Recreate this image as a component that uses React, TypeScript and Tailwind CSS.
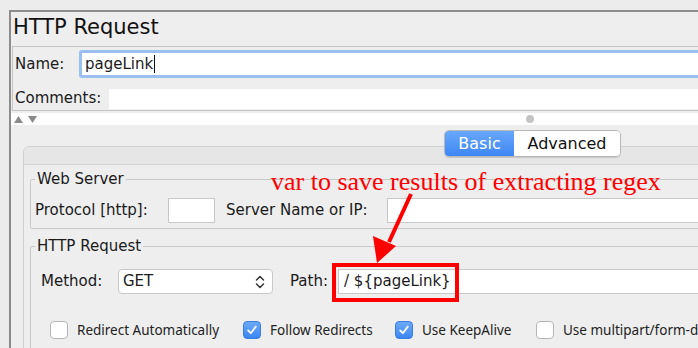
import React from 'react'

const ui = { fontFamily: '"DejaVu Sans", "Noto Sans", sans-serif' }

function Check({ on }: { on?: boolean }) {
  if (on) {
    return (
      <span className="w-[18px] h-[18px] rounded-[4px] bg-gradient-to-b from-[#6aa9f7] to-[#3a87f2] border border-[#3b7ddc] flex items-center justify-center shrink-0">
        <svg width="12" height="12" viewBox="0 0 12 12">
          <path d="M2.2 6.4 L4.8 9.2 L9.8 2.6" fill="none" stroke="#fff" strokeWidth="1.8" strokeLinecap="round" strokeLinejoin="round" />
        </svg>
      </span>
    )
  }
  return <span className="w-[18px] h-[18px] rounded-[4px] bg-white border border-[#b5b5b5] shrink-0" />
}

function Option({ on, label, w }: { on?: boolean, label: string, w: string }) {
  return (
    <div className={'flex items-center shrink-0 ' + w}>
      <Check on={on} />
      <span className="ml-[9px] whitespace-nowrap">{label}</span>
    </div>
  )
}

function GroupBox({ title, children, className }: { title: string, children: React.ReactNode, className?: string }) {
  return (
    <div className={'relative border border-[#c8c8c8] rounded-[2px] ' + (className || '')}>
      <span className="absolute -top-[11px] left-[4px] px-[2px] bg-[#eeeeee] text-[15px] leading-[20px] text-[#1a1a1a]">{title}</span>
      {children}
    </div>
  )
}

export default function App() {
  return (
    <div className="w-[698px] h-[348px] bg-[#ececec] overflow-hidden relative" style={ui}>
      <div className="pt-[10px] pl-[9px]">
        <div className="border-t-2 border-l-2 border-[#8c8c8c] bg-[#eeeeee] w-[1000px] h-[400px]">
          {/* title */}
          <div className="h-[34px] pl-[2px] pt-[1px] text-[21px] leading-[28px] text-[#111]">HTTP Request</div>

          {/* name / comments */}
          <div className="ml-[1px] border border-[#c4c4c4] h-[65px] text-[15px] text-[#1a1a1a]">
            <div className="flex items-center h-[34px] pl-[2px]">
              <span className="w-[64px] shrink-0">Name:</span>
              <div className="flex-1 h-[28px] bg-white border-[3px] border-[#9bbff0] rounded-[3px] flex items-center pl-[3px]">
                pageLink<span className="w-px h-[18px] bg-[#111] ml-px" />
              </div>
            </div>
            <div className="flex items-center h-[21px] mt-[7px] pl-[2px]">
              <span className="w-[94px] shrink-0">Comments:</span>
              <div className="flex-1 h-[20px] bg-white" />
            </div>
          </div>

          {/* splitter */}
          <div className="h-[12px] mt-[2px] bg-white flex items-center pl-[3px] gap-[5px] relative">
            <svg width="9" height="7" viewBox="0 0 9 7"><path d="M0 7 L4.5 0 L9 7 Z" fill="#8a8a8a" /></svg>
            <svg width="9" height="7" viewBox="0 0 9 7"><path d="M0 0 L4.5 7 L9 0 Z" fill="#8a8a8a" /></svg>
            <span className="absolute left-[515px] top-[2px] w-[8px] h-[8px] rounded-full bg-[#c4c4c4]" />
          </div>

          {/* tab pane */}
          <div className="ml-[12px] mt-[21px] w-[1014px] h-[300px] border border-[#d0d0d0] rounded-[6px] relative">
            <div className="absolute left-[420px] -top-[17px] flex h-[27px] text-[16px] rounded-[5px] border border-[#b8b8b8] overflow-hidden shadow-[0_1px_1px_rgba(0,0,0,0.15)]">
              <span className="w-[69px] bg-gradient-to-b from-[#69a8fa] to-[#3d86f4] text-white flex items-center justify-center">Basic</span>
              <span className="w-[106px] bg-white text-[#111] flex items-center justify-center">Advanced</span>
            </div>
            <div className="h-[18px] bg-[#e6e6e6] rounded-t-[6px] border-b border-[#d4d4d4]" />
            <div className="pl-[6px] pt-[14px] text-[15px] text-[#1a1a1a]">
              <GroupBox title="Web Server" className="h-[50px]">
                <div className="flex items-center mt-[18px] pl-[4px] h-[25px]">
                  <span className="w-[133px] shrink-0">Protocol [http]:</span>
                  <span className="w-[47px] h-[25px] bg-white border border-[#c8c8c8] shrink-0" />
                  <span className="ml-[11px] w-[161px] shrink-0">Server Name or IP:</span>
                  <span className="flex-1 h-[25px] bg-white border border-[#c8c8c8]" />
                </div>
              </GroupBox>
              <GroupBox title="HTTP Request" className="mt-[17px] h-[120px]">
                <div className="flex items-center pl-[10px] h-[25px] mt-[22px]">
                  <span className="w-[77px] shrink-0">Method:</span>
                  <span className="w-[155px] h-[25px] bg-white border border-[#c8c8c8] rounded-[4px] flex items-center pl-[4px] relative shrink-0">
                    GET
                    <svg className="absolute right-[7px] top-[4px]" width="10" height="16" viewBox="0 0 10 16">
                      <path d="M1.5 6 L5 2.5 L8.5 6 M1.5 10 L5 13.5 L8.5 10" fill="none" stroke="#333" strokeWidth="1.5" strokeLinecap="round" strokeLinejoin="round" />
                    </svg>
                  </span>
                  <span className="ml-[17px] w-[48px] shrink-0">Path:</span>
                  <span className="flex-1 h-[25px] bg-white border border-[#c8c8c8] flex items-center pl-[5px] whitespace-pre">/ ${'{'}pageLink{'}'}</span>
                </div>
                <div className="flex items-center h-[18px] mt-[27px] pl-[19px] text-[13.5px] text-[#222]" style={{ fontFamily: '"Noto Sans", sans-serif' }}>
                  <Option label="Redirect Automatically" w="w-[193px]" />
                  <Option on label="Follow Redirects" w="w-[152px]" />
                  <Option on label="Use KeepAlive" w="w-[141px]" />
                  <Option label="Use multipart/form-data for POST" w="w-[260px]" />
                </div>
              </GroupBox>
            </div>
          </div>
        </div>
      </div>

      {/* annotation */}
      <div className="absolute left-[271px] top-[167px] text-[26px] leading-[30px] text-[#ff0000] whitespace-nowrap" style={{ fontFamily: '"Liberation Serif", serif' }}>
        var to save results of extracting regex
      </div>
      <div className="absolute left-[332px] top-[263px] w-[127px] h-[39px] border-[4px] border-[#ff0000]" />
      <svg className="absolute left-0 top-0" width="698" height="348" viewBox="0 0 698 348">
        <line x1="411" y1="194" x2="389" y2="242" stroke="#ff0000" strokeWidth="4" />
        <path d="M377 263 L373 236 L396 246 Z" fill="#ff0000" />
      </svg>
    </div>
  )
}
